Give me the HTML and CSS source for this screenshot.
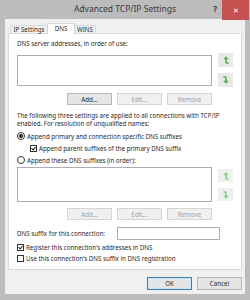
FILE: index.html
```html
<!DOCTYPE html>
<html>
<head>
    <link rel="stylesheet" href="styles.css">
</head>
<body>
    <div class="window">
        <div class="titlebar">
            <span class="title">Advanced TCP/IP Settings</span>
            <span class="help">?</span>
            <span class="close">&#x2715;</span>
        </div>
        <div class="client">
            <div class="tabs">
                <div class="tab tab-ip">IP Settings</div>
                <div class="tab tab-dns active">DNS</div>
                <div class="tab tab-wins">WINS</div>
            </div>
            <div class="panel">
                <div class="label">DNS server addresses, in order of use:</div>
                <div class="list-row">
                    <div class="listbox"></div>
                    <div class="arrows">
                        <div class="arrow-btn">
                            <svg width="6" height="8" viewBox="0 0 8 10">
                                <polygon points="4,0 0.5,4 7.5,4" fill="#43b04f"/>
                                <path d="M4 3 V7.5 Q4 9 5.5 9 H7.5" stroke="#43b04f" stroke-width="2" fill="none"/>
                            </svg>
                        </div>
                        <div class="arrow-btn">
                            <svg width="6" height="8" viewBox="0 0 8 10">
                                <polygon points="4,10 0.5,6 7.5,6" fill="#43b04f"/>
                                <path d="M4 7 V2.5 Q4 1 2.5 1 H0.5" stroke="#43b04f" stroke-width="2" fill="none"/>
                            </svg>
                        </div>
                    </div>
                </div>
                <div class="btn-row">
                    <button class="btn">Add...</button>
                    <button class="btn" disabled>Edit...</button>
                    <button class="btn" disabled>Remove</button>
                </div>
                <p class="note">The following three settings are applied to all connections with TCP/IP<br>enabled. For resolution of unqualified names:</p>
                <div class="option"><span class="radio checked"></span>Append primary and connection specific DNS suffixes</div>
                <div class="option sub"><span class="check checked"></span>Append parent suffixes of the primary DNS suffix</div>
                <div class="option"><span class="radio"></span>Append these DNS suffixes (in order):</div>
                <div class="list-row list-two">
                    <div class="listbox"></div>
                    <div class="arrows">
                        <div class="arrow-btn">
                            <svg width="6" height="8" viewBox="0 0 8 10">
                                <polygon points="4,0 0.5,4 7.5,4" fill="#7fcf86"/>
                                <path d="M4 3 V7.5 Q4 9 5.5 9 H7.5" stroke="#7fcf86" stroke-width="2" fill="none"/>
                            </svg>
                        </div>
                        <div class="arrow-btn">
                            <svg width="6" height="8" viewBox="0 0 8 10">
                                <polygon points="4,10 0.5,6 7.5,6" fill="#7fcf86"/>
                                <path d="M4 7 V2.5 Q4 1 2.5 1 H0.5" stroke="#7fcf86" stroke-width="2" fill="none"/>
                            </svg>
                        </div>
                    </div>
                </div>
                <div class="btn-row">
                    <button class="btn" disabled>Add...</button>
                    <button class="btn" disabled>Edit...</button>
                    <button class="btn" disabled>Remove</button>
                </div>
                <div class="suffix-row">
                    <span>DNS suffix for this connection:</span>
                    <div class="textbox"></div>
                </div>
                <div class="option small"><span class="check checked"></span>Register this connection's addresses in DNS</div>
                <div class="option small"><span class="check"></span>Use this connection's DNS suffix in DNS registration</div>
            </div>
            <div class="dialog-buttons">
                <button class="btn default">OK</button>
                <button class="btn">Cancel</button>
            </div>
        </div>
    </div>
</body>
</html>
```

FILE: styles.css
```css
body {
    margin: 0;
    padding: 0;
    font-family: "Noto Sans", "Open Sans", sans-serif;
    font-size: 6.2px;
    color: #2a2a2a;
}

.window {
    width: 250px;
    height: 300px;
    box-sizing: border-box;
    background-color: #bcbcbc;
    padding: 0 5px 6px 5px;
    display: flex;
    flex-direction: column;
}

.titlebar {
    height: 19px;
    display: flex;
    align-items: flex-start;
    position: relative;
}

.title {
    position: absolute;
    left: 0;
    right: 0;
    top: 3px;
    text-align: center;
    font-size: 8.5px;
    color: #3a3a3a;
}

.help {
    margin-left: auto;
    margin-top: 3px;
    font-size: 8px;
    font-weight: bold;
    color: #333;
}

.close {
    width: 27px;
    height: 20px;
    margin-left: 5px;
    margin-right: -4px;
    background-color: #c75050;
    color: #fff;
    font-size: 7px;
    display: flex;
    align-items: center;
    justify-content: center;
}

.client {
    flex: 1;
    background-color: #f0f0f0;
    padding: 4px 3px 4px 3px;
    display: flex;
    flex-direction: column;
}

.tabs {
    display: flex;
    align-items: flex-end;
    height: 10px;
    margin-left: 2px;
    position: relative;
    z-index: 1;
}

.tab {
    box-sizing: border-box;
    height: 8px;
    border: 1px solid #d9d9d9;
    border-bottom: none;
    background-color: #f0f0f0;
    display: flex;
    align-items: center;
    justify-content: center;
}

.tab-ip {
    width: 37px;
    border-right: none;
}

.tab-dns {
    width: 28px;
}

.tab-wins {
    width: 21px;
    border-left: none;
}

.tab.active {
    height: 11px;
    margin-bottom: -1px;
    background-color: #fff;
    padding-bottom: 2px;
    border-left-color: #d0d0d0;
    border-right-color: #d0d0d0;
}

.panel {
    box-sizing: border-box;
    height: 237px;
    background-color: #fff;
    border: 1px solid #d9d9d9;
    padding: 6px 0 0 8px;
}

.label {
    line-height: 8px;
}

.list-row {
    display: flex;
    margin-top: 5px;
}

.listbox {
    box-sizing: border-box;
    width: 195px;
    height: 31px;
    margin-top: 2px;
    border: 1px solid #abadb3;
    background-color: #fff;
}

.arrows {
    margin-left: 6px;
    display: flex;
    flex-direction: column;
    gap: 6px;
}

.arrow-btn {
    width: 15px;
    height: 14px;
    background-color: #e9e9e9;
    display: flex;
    align-items: center;
    justify-content: center;
}

.list-two {
    margin-top: 1px;
}

.list-two .listbox {
    height: 35px;
    margin-top: 0;
}

.list-two .arrows {
    margin-top: 2px;
}

.list-two .arrow-btn {
    height: 13px;
    background-color: #efefef;
}

.btn-row {
    display: flex;
    justify-content: flex-end;
    gap: 5px;
    width: 195px;
    margin-top: 6px;
}

.btn {
    box-sizing: border-box;
    width: 45px;
    height: 12px;
    padding: 0;
    font-family: inherit;
    font-size: 6.2px;
    color: #2a2a2a;
    background-color: #e5e5e5;
    border: 1px solid #b5b5b5;
}

.btn:disabled {
    color: #a0a0a0;
    background-color: #f0f0f0;
    border-color: #d5d5d5;
}

.note {
    margin: 7px 0 0 0;
    line-height: 8px;
    white-space: nowrap;
}

.option {
    display: flex;
    align-items: center;
    height: 12px;
}

.note + .option {
    margin-top: 2px;
}

.option.sub {
    padding-left: 13px;
}

.option.small {
    height: 11px;
}

.radio {
    box-sizing: border-box;
    width: 8px;
    height: 8px;
    border: 1px solid #333;
    border-radius: 50%;
    margin-right: 2px;
    display: flex;
    align-items: center;
    justify-content: center;
}

.radio.checked::before {
    content: '';
    width: 4px;
    height: 4px;
    border-radius: 50%;
    background-color: #222;
}

.check {
    box-sizing: border-box;
    width: 7px;
    height: 7px;
    border: 1px solid #333;
    margin-right: 2px;
    position: relative;
}

.check.checked::before {
    content: '';
    position: absolute;
    left: 1px;
    top: 0;
    width: 2px;
    height: 3px;
    border-right: 1px solid #222;
    border-bottom: 1px solid #222;
    transform: rotate(40deg);
}

.suffix-row {
    display: flex;
    align-items: center;
    margin-top: 7px;
    height: 13px;
}

.textbox {
    box-sizing: border-box;
    width: 103px;
    height: 13px;
    margin-left: auto;
    margin-right: 21px;
    border: 1px solid #abadb3;
    background-color: #fff;
}

.suffix-row + .option {
    margin-top: 2px;
}

.dialog-buttons {
    display: flex;
    justify-content: flex-end;
    gap: 5px;
    margin-top: 7px;
}

.dialog-buttons .btn {
    height: 13px;
}

.btn.default {
    border-color: #3c7fb1;
    box-shadow: inset 0 0 0 1px #cde4f7;
}
```
